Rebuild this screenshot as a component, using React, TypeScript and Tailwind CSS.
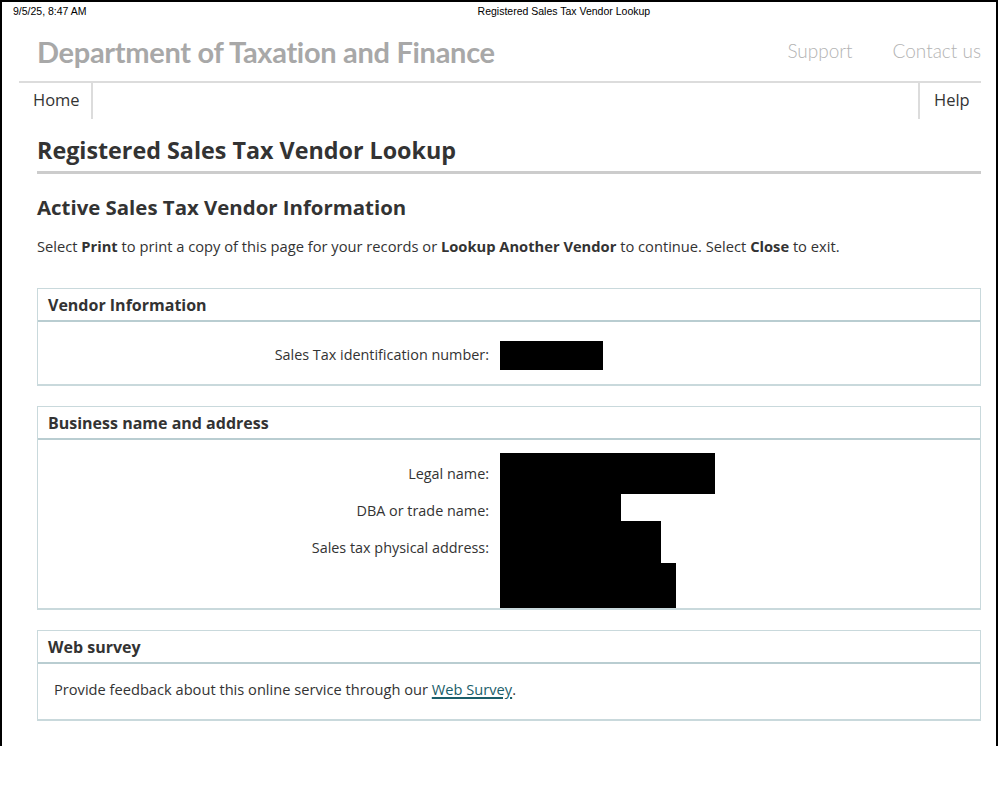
const bodyFont = { fontFamily: '"Open Sans", "Noto Sans", sans-serif' };

function Panel({ title, children }: { title: string; children: React.ReactNode }) {
  return (
    <section className="border border-[#c9d9dc] border-b-2">
      <div className="h-[33px] flex items-center px-[10px] border-b-2 border-[#b9cdd1]">
        <h3 className="text-[16px] font-bold text-[#333]">{title}</h3>
      </div>
      {children}
    </section>
  );
}

function Redacted({ className }: { className: string }) {
  return <div className={`bg-black ${className}`} />;
}

export default function App() {
  return (
    <div className="w-[998px] h-[794px] bg-white" style={bodyFont}>
      <div className="h-[746px] border-x-2 border-t-2 border-black">
        <div
          className="flex h-[20px] items-center pl-[11px] text-[10.5px] text-black"
          style={{ fontFamily: '"Liberation Sans", Arial, sans-serif' }}
        >
          <span>9/5/25, 8:47 AM</span>
          <span className="ml-[391px]">Registered Sales Tax Vendor Lookup</span>
        </div>

        <div className="ml-[17px] w-[962px]">
          <header className="flex items-center justify-between h-[59px] pl-[18px]">
            <span
              className="text-[29px] font-bold text-[#a8a8a8] tracking-[-0.3px]"
              style={{ fontFamily: 'Lato, "Open Sans", sans-serif' }}
            >
              Department of Taxation and Finance
            </span>
            <nav
              className="flex gap-[40px] text-[19px] font-light text-[#b3b3b3]"
              style={{ fontFamily: 'Lato, "Open Sans", sans-serif' }}
            >
              <span>Support</span>
              <span>Contact us</span>
            </nav>
          </header>

          <div className="flex h-[38px] border-t-2 border-[#dcdcdc] text-[16.5px] text-[#333]">
            <div className="w-[74px] flex items-center pl-[14px] pb-[2px] border-r-2 border-[#dcdcdc]">Home</div>
            <div className="flex-1" />
            <div className="w-[63px] flex items-center pl-[14px] pb-[2px] border-l-2 border-[#dcdcdc]">Help</div>
          </div>

          <main className="pl-[18px] text-[#333]">
            <h1 className="text-[23.3px] font-bold leading-[30px] pt-[16px] pb-[6px] border-b-[3px] border-[#cccccc]">
              Registered Sales Tax Vendor Lookup
            </h1>
            <h2 className="text-[20.4px] font-bold leading-[28px] mt-[19px]">Active Sales Tax Vendor Information</h2>
            <p className="text-[14.7px] leading-[22px] mt-[14px]">
              Select <b>Print</b> to print a copy of this page for your records or <b>Lookup Another Vendor</b> to
              continue. Select <b>Close</b> to exit.
            </p>

            <div className="mt-[31px] flex flex-col gap-[20px] text-[14.4px]">
              <Panel title="Vendor Information">
                <div className="flex items-center h-[62px] pt-[4px]">
                  <span className="w-[462px] text-right pr-[11px]">Sales Tax identification number:</span>
                  <Redacted className="w-[103px] h-[29px]" />
                </div>
              </Panel>

              <Panel title="Business name and address">
                <div className="flex pt-[13px]">
                  <div className="w-[462px] text-right pr-[11px] flex flex-col">
                    <span className="h-[41px] flex items-center justify-end">Legal name:</span>
                    <span className="h-[33px] flex items-center justify-end">DBA or trade name:</span>
                    <span className="h-[42px] flex items-center justify-end">Sales tax physical address:</span>
                  </div>
                  <div className="flex flex-col">
                    <Redacted className="w-[215px] h-[41px]" />
                    <Redacted className="w-[121px] h-[27px]" />
                    <Redacted className="w-[161px] h-[42px]" />
                    <Redacted className="w-[176px] h-[45px]" />
                  </div>
                </div>
              </Panel>

              <Panel title="Web survey">
                <div className="h-[55px] flex items-center px-[16px] pb-[3px] text-[14.65px]">
                  <span>
                    Provide feedback about this online service through our{' '}
                    <a href="#" className="text-[#1b5e6a] underline decoration-2 underline-offset-2">
                      Web Survey
                    </a>
                    .
                  </span>
                </div>
              </Panel>
            </div>
          </main>
        </div>
      </div>
    </div>
  );
}
